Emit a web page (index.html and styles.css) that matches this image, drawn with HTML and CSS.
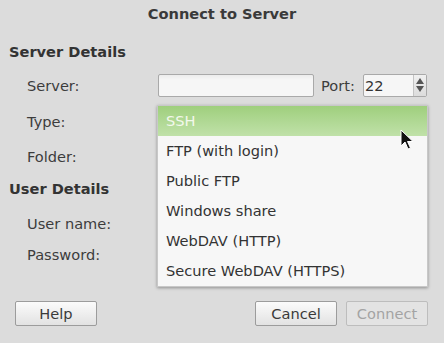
FILE: index.html
```html
<!DOCTYPE html>
<html>
<head>
<meta charset="utf-8">
<link rel="stylesheet" href="styles.css">
</head>
<body>
<div class="dialog">
  <div class="title">Connect to Server</div>
  <div class="content">
    <div class="heading h1">Server Details</div>
    <div class="row r-server">
      <span class="label">Server:</span>
      <span class="entry server-entry"></span>
      <span class="port-label">Port:</span>
      <span class="spin"><span class="spin-text">22</span><span class="spin-arrows"><span class="up"></span><span class="down"></span></span></span>
    </div>
    <div class="row r-type">
      <span class="label">Type:</span>
      <span class="entry combo"></span>
    </div>
    <div class="row r-folder">
      <span class="label">Folder:</span>
      <span class="entry wide"></span>
    </div>
    <div class="heading h2">User Details</div>
    <div class="row r-user">
      <span class="label">User name:</span>
      <span class="entry wide"></span>
    </div>
    <div class="row r-pass">
      <span class="label">Password:</span>
      <span class="entry wide"></span>
    </div>
  </div>
  <div class="buttons">
    <button class="btn">Help</button>
    <span class="spacer"></span>
    <button class="btn">Cancel</button>
    <button class="btn disabled">Connect</button>
  </div>

  <div class="menu">
    <div class="item selected">SSH</div>
    <div class="item">FTP (with login)</div>
    <div class="item">Public FTP</div>
    <div class="item">Windows share</div>
    <div class="item">WebDAV (HTTP)</div>
    <div class="item">Secure WebDAV (HTTPS)</div>
  </div>
  <svg class="cursor" width="14" height="22" viewBox="0 0 14 22">
    <path d="M1 1 L1 17 L5 13 L8 20 L10.5 19 L7.5 12.5 L13 12.5 Z" fill="#111" stroke="#fff" stroke-width="1"/>
  </svg>
</div>
</body>
</html>
```

FILE: styles.css
```css
html, body {
  margin: 0;
  padding: 0;
}
body {
  width: 444px;
  height: 343px;
  overflow: hidden;
  font-family: "DejaVu Sans", sans-serif;
  font-size: 14.6px;
  color: #3c3c3c;
  background: #dcdcdc;
}
.dialog {
  position: relative;
  width: 444px;
  height: 343px;
  background: #dcdcdc;
  display: flex;
  flex-direction: column;
}
.title {
  height: 28px;
  line-height: 28px;
  text-align: center;
  font-weight: bold;
  color: #3a3a3a;
}
.content {
  display: flex;
  flex-direction: column;
  padding-left: 9px;
}
.heading {
  font-weight: bold;
  height: 20px;
  line-height: 20px;
  color: #333;
}
.h1 { margin-top: 14px; }
.h2 { margin-top: 11px; }
.row {
  display: flex;
  align-items: center;
  height: 24px;
}
.r-server { margin-top: 11px; }
.r-type { margin-top: 12px; }
.r-folder { margin-top: 11px; }
.r-user { margin-top: 12px; }
.r-pass { margin-top: 7px; }
.label {
  padding-left: 18px;
  box-sizing: border-box;
  width: 149px;
  white-space: nowrap;
}
.entry {
  display: block;
  height: 23px;
  box-sizing: border-box;
  border: 1px solid #a9a9a9;
  border-radius: 2px;
  background: linear-gradient(#ececec, #f6f6f6 5px);
}
.server-entry { width: 156px; }
.wide { width: 270px; }
.combo { width: 270px; }
.port-label {
  margin-left: 7px;
  width: 42px;
}
.spin {
  display: flex;
  height: 23px;
  width: 64px;
  box-sizing: border-box;
  border: 1px solid #a9a9a9;
  border-radius: 2px;
  background: #f6f6f6;
}
.spin-text {
  flex: 1;
  line-height: 21px;
  padding-left: 1px;
  color: #333;
}
.spin-arrows {
  width: 12px;
  border-left: 1px solid #c4c4c4;
  display: flex;
  flex-direction: column;
  align-items: center;
  justify-content: center;
  gap: 2px;
  background: linear-gradient(#f0f0f0, #dcdcdc);
}
.up {
  width: 0; height: 0;
  border-left: 4px solid transparent;
  border-right: 4px solid transparent;
  border-bottom: 6px solid #555;
}
.down {
  width: 0; height: 0;
  border-left: 4px solid transparent;
  border-right: 4px solid transparent;
  border-top: 6px solid #555;
}
.buttons {
  margin-top: auto;
  display: flex;
  align-items: center;
  padding: 0 16px 17px 15px;
  gap: 9px;
}
.spacer { flex: 1; }
.btn {
  width: 82px;
  height: 25px;
  box-sizing: border-box;
  border: 1px solid #9c9c9c;
  border-radius: 2px;
  background: linear-gradient(#fbfbfb, #e2e2e2);
  font-family: "DejaVu Sans", sans-serif;
  font-size: 14.6px;
  color: #3a3a3a;
  padding: 0;
}
.btn.disabled {
  color: #a3a3a3;
  border-color: #bdbdbd;
  background: #e3e3e3;
}
.menu {
  position: absolute;
  left: 157px;
  top: 105px;
  width: 271px;
  box-sizing: border-box;
  border: 1px solid #c8c8c8;
  background: #f7f7f7;
  box-shadow: 0 1px 3px rgba(0,0,0,0.35);
}
.item {
  height: 30px;
  line-height: 30px;
  padding-left: 8px;
  color: #333;
}
.item.selected {
  background: linear-gradient(#9fcf7d, #c0e1a9);
  color: #f3f8ec;
}
.cursor {
  position: absolute;
  left: 400px;
  top: 129px;
}
```
